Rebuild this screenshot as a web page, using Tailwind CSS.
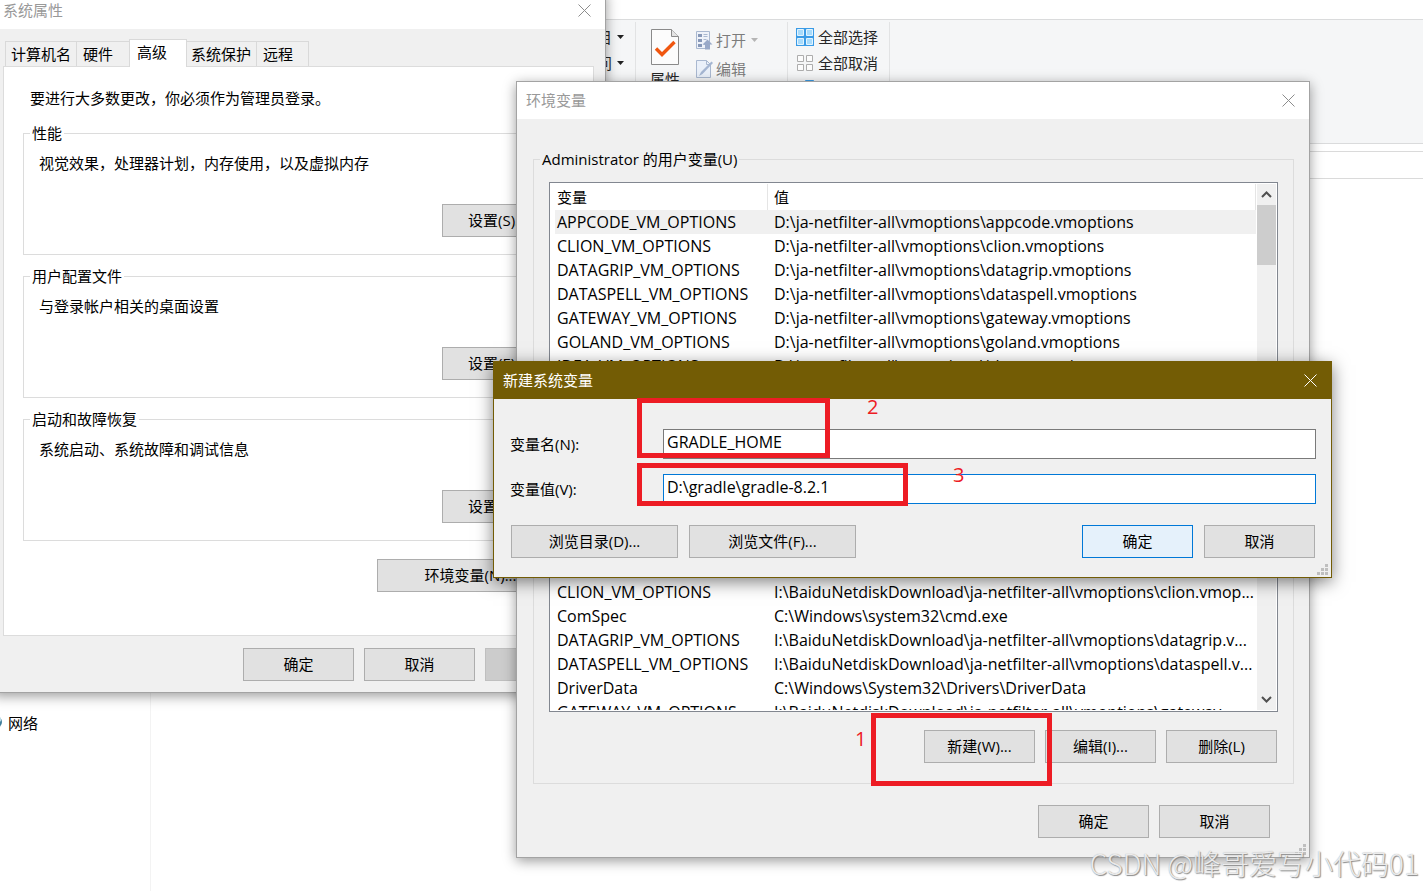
<!DOCTYPE html>
<html lang="zh-CN">
<head>
    <meta charset="UTF-8">
    <meta name="viewport" content="width=device-width, initial-scale=1.0">
    <title>环境变量</title>
    <script src="https://cdn.jsdelivr.net/npm/@tailwindcss/browser@4"></script>
</head>
<body class="bg-white text-black text-[15px] leading-5 font-['Open_Sans','Noto_Sans_CJK_SC',sans-serif]">

<div class="relative min-h-screen overflow-hidden flex flex-col whitespace-nowrap">

    <!-- Explorer window -->
    <div class="h-5 border-b border-[#dadbdc]"></div>
    <div class="h-31 bg-[#f5f6f7] border-b border-[#dadbdc] flex pt-0.5 pb-1 text-[#262626]">
        <div class="w-[636px] border-r border-[#e2e3e4] pt-[5px] pr-[11px] flex flex-col items-end gap-1.5">
            <button class="flex items-center gap-[5px]">新建项目
                <svg class="w-[7px] h-1" viewBox="0 0 7 4"><path d="M0 0h7L3.500 4z" fill="#222"/></svg>
            </button>
            <button class="flex items-center gap-[5px]">轻松访问
                <svg class="w-[7px] h-1" viewBox="0 0 7 4"><path d="M0 0h7L3.500 4z" fill="#222"/></svg>
            </button>
        </div>
        <div class="w-38 border-r border-[#e2e3e4] pl-3.5 flex">
            <button class="pt-[7px] flex flex-col items-center gap-1 self-start">
                <svg class="w-7 h-9" viewBox="0 0 28 36">
                    <path d="M.5.5h20l7 7v28H.5z" fill="#fcfcfc" stroke="#8a8a8a"/>
                    <path d="M20.500.5v7h7" fill="#e4e4e4" stroke="#8a8a8a"/>
                    <path d="M5 19.500l6 6L23.500 13" fill="none" stroke="#f0560f" stroke-width="3.400"/>
                </svg>
                <span>属性</span>
            </button>
            <div class="pl-4 pt-2 flex flex-col gap-[9px] text-[#7c7c7c]">
                <button class="flex items-center gap-[3px]">
                    <svg class="w-[17px] h-5" viewBox="0 0 17 20">
                        <path d="M.5 1.500h13v17H.5z" fill="#eef2f9" stroke="#a9b8d0"/>
                        <path d="M2 4h4v3H2zM2 9h4v3H2zM2 14h4v3H2z" fill="#8798b8"/>
                        <path d="M7.500 4.500h4M7.500 6.500h4M7.500 9.500h3M7.500 14.500h2" stroke="#a9b8d0"/>
                        <path d="M11.500 9.500l5 5h-2.500v5h-5v-5H6.500z" fill="#99a9c8"/>
                    </svg>打开
                    <svg class="ml-0.5 w-[7px] h-1" viewBox="0 0 7 4"><path d="M0 0h7L3.500 4z" fill="#b5b5b5"/></svg>
                </button>
                <button class="flex items-center gap-[3px]">
                    <svg class="w-[17px] h-5" viewBox="0 0 17 20">
                        <path d="M.5 1.500h10l4 4v13H.5z" fill="#eaf0f9" stroke="#a9b8d0"/>
                        <path d="M10.500 1.500v4h4" fill="none" stroke="#a9b8d0"/>
                        <path d="M3 17l2-4L15.500 2.500l1.500 1.500L6.500 15z" fill="#a5b6d2"/>
                    </svg>编辑
                </button>
            </div>
        </div>
        <div class="w-[102px] border-r border-[#e2e3e4] pl-2 pt-[5px] flex flex-col gap-1.5">
            <button class="flex items-center gap-1">
                <svg class="w-[18px] h-[18px]" viewBox="0 0 18 18">
                    <path d="M0 0h18v18H0z" fill="#3a9be6"/>
                    <path d="M1.500 1.500h6v6h-6zM10.500 1.500h6v6h-6zM1.500 10.500h6v6h-6zM10.500 10.500h6v6h-6z" fill="#a8dbfb" stroke="#e3f4fe"/>
                </svg>全部选择
            </button>
            <button class="flex items-center gap-1">
                <svg class="w-[18px] h-[18px]" viewBox="0 0 18 18">
                    <path d="M1.500 1.500h6v6h-6zM10.500 1.500h6v6h-6zM1.500 10.500h6v6h-6zM10.500 10.500h6v6h-6z" fill="#fcfcfc" stroke="#adadad"/>
                </svg>全部取消
            </button>
            <button class="flex items-center gap-1">
                <svg class="w-[18px] h-[18px]" viewBox="0 0 18 18">
                    <path d="M1.500 1.500h6v6h-6zM10.500 10.500h6v6h-6z" fill="#fcfcfc" stroke="#adadad"/>
                    <path d="M9.500.5h8v8h-8zM.5 9.500h8v8h-8z" fill="#a8dbfb" stroke="#3a9be6"/>
                </svg>反向选择
            </button>
        </div>
    </div>
    <div class="h-2 border-b border-[#dadada]"></div>
    <div class="h-[27px] border-b border-[#dadada]"></div>
    <div class="grow flex">
        <nav class="w-[151px] border-r border-[#f3f3f3] pt-[534px]">
            <a href="#" class="flex items-center">
                <svg class="w-2 h-4" viewBox="0 0 8 16"><circle cx="-4" cy="7" r="6" fill="#3f7f9c"/><path d="M-2 2l3 1v3l-3 2z" fill="#b9dbe6"/></svg>网络
            </a>
        </nav>
    </div>

    <!-- System properties -->
    <section class="absolute -left-[7px] -top-[9px] w-[613px] h-[702px] bg-[#f0f0f0] border border-[#a3a3a3] shadow-[0_3px_12px_rgba(0,0,0,0.4)]">
        <header class="h-[37px] bg-white flex items-center justify-between pl-[9px] pr-3.5 text-[#999]">
            <h2 class="pb-0.5">系统属性</h2>
            <button aria-label="关闭"><svg class="w-[13px] h-[13px]" viewBox="0 0 13 13"><path d="M.5.5l12 12M12.500.5l-12 12" stroke="#8c8c8c" fill="none"/></svg></button>
        </header>
        <div class="pl-[9px] pr-[11px] pt-2.5">
            <div role="tablist" class="flex items-end h-[27px] pl-0.5">
                <button role="tab" class="w-[71px] h-[25px] px-[5px] text-left border-l border-t border-[#d9d9d9]">计算机名</button>
                <button role="tab" class="w-[53px] h-[25px] px-1.5 text-left border-l border-t border-[#d9d9d9]">硬件</button>
                <button role="tab" aria-selected="true" class="w-[58px] h-7 -mb-px px-[7px] text-left bg-white border-x border-t border-[#d9d9d9] relative pb-1">高级</button>
                <button role="tab" class="w-[69px] h-[25px] px-1 text-left border-t border-[#d9d9d9]">系统保护</button>
                <button role="tab" class="w-[53px] h-[25px] px-1.5 text-left border-x border-t border-[#d9d9d9]">远程</button>
            </div>
            <div role="tabpanel" class="h-[570px] bg-white border border-[#dcdcdc] px-[19px] pt-[21px]">
                <p class="pl-[7px]">要进行大多数更改，你必须作为管理员登录。</p>
                <div class="mt-[15px] flex flex-col gap-[11px]">
                    <fieldset class="h-[132px] border border-[#dcdcdc]">
                        <legend class="ml-1.5 px-0.5">性能</legend>
                        <p class="mt-2.5 pl-[15px]">视觉效果，处理器计划，内存使用，以及虚拟内存</p>
                        <div class="mt-[31px] pr-5 flex justify-end">
                            <button class="w-[111px] h-[33px] pb-0.5 bg-[#e1e1e1] border border-[#adadad]">设置(S)...</button>
                        </div>
                    </fieldset>
                    <fieldset class="h-[132px] border border-[#dcdcdc]">
                        <legend class="ml-1.5 px-0.5">用户配置文件</legend>
                        <p class="mt-2.5 pl-[15px]">与登录帐户相关的桌面设置</p>
                        <div class="mt-[31px] pr-5 flex justify-end">
                            <button class="w-[111px] h-[33px] pb-0.5 bg-[#e1e1e1] border border-[#adadad]">设置(E)...</button>
                        </div>
                    </fieldset>
                    <fieldset class="h-[132px] border border-[#dcdcdc]">
                        <legend class="ml-1.5 px-0.5">启动和故障恢复</legend>
                        <p class="mt-2.5 pl-[15px]">系统启动、系统故障和调试信息</p>
                        <div class="mt-[31px] pr-5 flex justify-end">
                            <button class="w-[111px] h-[33px] pb-0.5 bg-[#e1e1e1] border border-[#adadad]">设置(T)...</button>
                        </div>
                    </fieldset>
                </div>
                <div class="mt-[18px] pr-2.5 flex justify-end">
                    <button class="w-[187px] h-[33px] pb-0.5 bg-[#e1e1e1] border border-[#adadad]">环境变量(N)...</button>
                </div>
            </div>
        </div>
        <footer class="mt-3 pr-[9px] flex justify-end gap-2.5">
            <button class="w-[111px] h-[33px] pb-0.5 bg-[#e1e1e1] border border-[#adadad]">确定</button>
            <button class="w-[111px] h-[33px] pb-0.5 bg-[#e1e1e1] border border-[#adadad]">取消</button>
            <button disabled class="w-[111px] h-[33px] pb-0.5 bg-[#cccccc] border border-[#bfbfbf] text-[#838383]">应用(A)</button>
        </footer>
    </section>

    <!-- Environment variables -->
    <section class="absolute left-[516px] top-[81px] w-[794px] h-[777px] bg-[#f0f0f0] border border-[#a3a3a3] shadow-[0_3px_12px_rgba(0,0,0,0.4)]">
        <header class="h-[37px] bg-white flex items-center justify-between pl-[9px] pr-3.5 text-[#999]">
            <h2 class="pb-0.5">环境变量</h2>
            <button aria-label="关闭"><svg class="w-[13px] h-[13px]" viewBox="0 0 13 13"><path d="M.5.5l12 12M12.500.5l-12 12" stroke="#8c8c8c" fill="none"/></svg></button>
        </header>
        <div class="pl-4 pr-[15px] pt-[30px]">
            <fieldset class="border border-[#dcdcdc] pb-5">
                <legend class="ml-1.5 px-0.5">Administrator 的用户变量(U)</legend>
                <div class="mx-[15px] mt-[13px] h-[237px] bg-white border border-[#828790] flex pl-[5px] pr-px py-px overflow-hidden">
                    <div class="grow min-w-0">
                        <table class="w-full table-fixed border-separate border-spacing-0 text-left">
                            <thead>
                                <tr class="h-[26px]">
                                    <th class="w-[213px] p-0 pl-0.5 font-normal border-r border-[#e5e5e5]">变量</th>
                                    <th class="p-0 pl-1.5 font-normal border-r border-[#e5e5e5]">值</th>
                                </tr>
                            </thead>
                            <tbody class="text-[16px] leading-5">
                                <tr class="h-6 bg-[#f0f0f0]"><td class="p-0 pl-0.5">APPCODE_VM_OPTIONS</td><td class="p-0 pl-1.5">D:\ja-netfilter-all\vmoptions\appcode.vmoptions</td></tr>
                                <tr class="h-6"><td class="p-0 pl-0.5">CLION_VM_OPTIONS</td><td class="p-0 pl-1.5">D:\ja-netfilter-all\vmoptions\clion.vmoptions</td></tr>
                                <tr class="h-6"><td class="p-0 pl-0.5">DATAGRIP_VM_OPTIONS</td><td class="p-0 pl-1.5">D:\ja-netfilter-all\vmoptions\datagrip.vmoptions</td></tr>
                                <tr class="h-6"><td class="p-0 pl-0.5">DATASPELL_VM_OPTIONS</td><td class="p-0 pl-1.5">D:\ja-netfilter-all\vmoptions\dataspell.vmoptions</td></tr>
                                <tr class="h-6"><td class="p-0 pl-0.5">GATEWAY_VM_OPTIONS</td><td class="p-0 pl-1.5">D:\ja-netfilter-all\vmoptions\gateway.vmoptions</td></tr>
                                <tr class="h-6"><td class="p-0 pl-0.5">GOLAND_VM_OPTIONS</td><td class="p-0 pl-1.5">D:\ja-netfilter-all\vmoptions\goland.vmoptions</td></tr>
                                <tr class="h-6"><td class="p-0 pl-0.5">IDEA_VM_OPTIONS</td><td class="p-0 pl-1.5">D:\ja-netfilter-all\vmoptions\idea.vmoptions</td></tr>
                            </tbody>
                        </table>
                    </div>
                    <div class="ml-px w-5 bg-[#f0f0f0] flex flex-col">
                        <button aria-label="向上滚动" class="h-[21px] w-[19px] flex items-center justify-center">
                            <svg class="w-[11px] h-[7px]" viewBox="0 0 11 7"><path d="M1 6l4.500-4.500L10 6" fill="none" stroke="#505050" stroke-width="2"/></svg>
                        </button>
                        <div class="h-15 w-[19px] bg-[#cdcdcd]"></div>
                    </div>
                </div>
                <div class="mt-[18px] pr-4 flex justify-end gap-2.5">
                    <button class="w-[111px] h-[33px] pb-0.5 bg-[#e1e1e1] border border-[#adadad]">新建(N)...</button>
                    <button class="w-[111px] h-[33px] pb-0.5 bg-[#e1e1e1] border border-[#adadad]">编辑(E)...</button>
                    <button class="w-[111px] h-[33px] pb-0.5 bg-[#e1e1e1] border border-[#adadad]">删除(D)</button>
                </div>
            </fieldset>
            <fieldset class="mt-1 border border-[#dcdcdc] pb-5">
                <legend class="ml-1.5 px-0.5">系统变量(S)</legend>
                <div class="mx-[15px] mt-[13px] h-46 bg-white border border-[#828790] flex pl-[5px] pr-px py-px">
                    <div class="grow min-w-0 overflow-hidden">
                        <table class="w-full table-fixed border-separate border-spacing-0 text-left">
                            <thead>
                                <tr class="h-[26px]">
                                    <th class="w-[213px] p-0 pl-0.5 font-normal border-r border-[#e5e5e5]">变量</th>
                                    <th class="p-0 pl-1.5 font-normal border-r border-[#e5e5e5]">值</th>
                                </tr>
                            </thead>
                            <tbody class="text-[16px] leading-5">
                                <tr class="h-6"><td class="p-0 pl-0.5">APPCODE_VM_OPTIONS</td><td class="p-0 pl-1.5">I:\BaiduNetdiskDownload\ja-netfilter-all\vmoptions\appcode.v...</td></tr>
                                <tr class="h-6"><td class="p-0 pl-0.5">CLION_VM_OPTIONS</td><td class="p-0 pl-1.5">I:\BaiduNetdiskDownload\ja-netfilter-all\vmoptions\clion.vmop...</td></tr>
                                <tr class="h-6"><td class="p-0 pl-0.5">ComSpec</td><td class="p-0 pl-1.5">C:\Windows\system32\cmd.exe</td></tr>
                                <tr class="h-6"><td class="p-0 pl-0.5">DATAGRIP_VM_OPTIONS</td><td class="p-0 pl-1.5">I:\BaiduNetdiskDownload\ja-netfilter-all\vmoptions\datagrip.v...</td></tr>
                                <tr class="h-6"><td class="p-0 pl-0.5">DATASPELL_VM_OPTIONS</td><td class="p-0 pl-1.5">I:\BaiduNetdiskDownload\ja-netfilter-all\vmoptions\dataspell.v...</td></tr>
                                <tr class="h-6"><td class="p-0 pl-0.5">DriverData</td><td class="p-0 pl-1.5">C:\Windows\System32\Drivers\DriverData</td></tr>
                                <tr class="h-6"><td class="p-0 pl-0.5">GATEWAY_VM_OPTIONS</td><td class="p-0 pl-1.5">I:\BaiduNetdiskDownload\ja-netfilter-all\vmoptions\gateway....</td></tr>
                            </tbody>
                        </table>
                    </div>
                    <div class="ml-px w-5 bg-[#f0f0f0] flex flex-col justify-end">
                        <button aria-label="向下滚动" class="h-[21px] w-[19px] flex items-center justify-center">
                            <svg class="w-[11px] h-[7px]" viewBox="0 0 11 7"><path d="M1 1l4.500 4.500L10 1" fill="none" stroke="#505050" stroke-width="2"/></svg>
                        </button>
                    </div>
                </div>
                <div class="mt-[18px] pr-4 flex justify-end gap-2.5">
                    <button class="w-[111px] h-[33px] pb-0.5 bg-[#e1e1e1] border border-[#adadad]">新建(W)...</button>
                    <button class="w-[111px] h-[33px] pb-0.5 bg-[#e1e1e1] border border-[#adadad]">编辑(I)...</button>
                    <button class="w-[111px] h-[33px] pb-0.5 bg-[#e1e1e1] border border-[#adadad]">删除(L)</button>
                </div>
            </fieldset>
            <div class="mt-[21px] pr-6 flex justify-end gap-2.5">
                <button class="w-[111px] h-[33px] pb-0.5 bg-[#e1e1e1] border border-[#adadad]">确定</button>
                <button class="w-[111px] h-[33px] pb-0.5 bg-[#e1e1e1] border border-[#adadad]">取消</button>
            </div>
        </div>
        <svg class="absolute right-[3px] bottom-0.5 w-[11px] h-[11px]" viewBox="0 0 11 11"><path d="M8 0h3v3H8zM4 4h3v3H4zM8 4h3v3H8zM0 8h3v3H0zM4 8h3v3H4zM8 8h3v3H8z" fill="#bfbfbf"/></svg>
    </section>

    <!-- New system variable -->
    <form class="absolute left-[493px] top-[361px] w-[839px] h-[217px] bg-[#f0f0f0] border border-[#735c05] shadow-[0_4px_16px_rgba(0,0,0,0.5)]">
        <header class="h-[37px] bg-[#735c05] flex items-center justify-between pl-[9px] pr-3.5 text-white">
            <h2 class="pb-0.5">新建系统变量</h2>
            <button type="button" aria-label="关闭"><svg class="w-[13px] h-[13px]" viewBox="0 0 13 13"><path d="M.5.5l12 12M12.500.5l-12 12" stroke="#fff" fill="none"/></svg></button>
        </header>
        <div class="pl-4 pr-[15px] pt-[30px]">
            <div class="flex items-center">
                <label for="var-name" class="w-[153px]">变量名(N):</label>
                <input id="var-name" type="text" value="GRADLE_HOME" class="grow h-[30px] bg-white border border-[#7a7a7a] px-[3px] pb-1 text-[16px] outline-none">
            </div>
            <div class="mt-[15px] flex items-center">
                <label for="var-value" class="w-[153px]">变量值(V):</label>
                <input id="var-value" type="text" value="D:\gradle\gradle-8.2.1" class="grow h-[30px] bg-white border border-[#0078d7] px-[3px] pb-1 text-[16px] outline-none">
            </div>
            <div class="mt-[21px] px-px flex gap-[11px]">
                <button type="button" class="w-[167px] h-[33px] pb-0.5 bg-[#e1e1e1] border border-[#adadad]">浏览目录(D)...</button>
                <button type="button" class="w-[167px] h-[33px] pb-0.5 bg-[#e1e1e1] border border-[#adadad]">浏览文件(F)...</button>
                <button type="button" class="ml-auto w-[111px] h-[33px] pb-0.5 bg-[#e5f1fb] border border-[#0078d7]">确定</button>
                <button type="button" class="w-[111px] h-[33px] pb-0.5 bg-[#e1e1e1] border border-[#adadad]">取消</button>
            </div>
        </div>
        <svg class="absolute right-[3px] bottom-0.5 w-[11px] h-[11px]" viewBox="0 0 11 11"><path d="M8 0h3v3H8zM4 4h3v3H4zM8 4h3v3H8zM0 8h3v3H0zM4 8h3v3H4zM8 8h3v3H8z" fill="#bfbfbf"/></svg>
    </form>

    <!-- Step markers -->
    <div class="absolute left-[871px] top-[713px] w-[181px] h-[73px] border-5 border-[#ed1c24]"></div>
    <div class="absolute left-[637px] top-[398px] w-[193px] h-[60px] border-5 border-[#ed1c24]"></div>
    <div class="absolute left-[637px] top-[463px] w-[271px] h-[43px] border-5 border-[#ed1c24]"></div>
    <span class="absolute left-[855px] top-[729px] text-xl leading-5 text-[#ed1c24]">1</span>
    <span class="absolute left-[867px] top-[397px] text-xl leading-5 text-[#ed1c24]">2</span>
    <span class="absolute left-[953px] top-[465px] text-xl leading-5 text-[#ed1c24]">3</span>

    <!-- Watermark -->
    <div class="absolute right-1 bottom-2.5 text-[28px] leading-9 font-light font-['Noto_Sans_CJK_SC',sans-serif] text-white/80 [text-shadow:1px_1px_1px_#888,0_0_1px_#999]">CSDN @峰哥爱写小代码01</div>
</div>

</body>
</html>
